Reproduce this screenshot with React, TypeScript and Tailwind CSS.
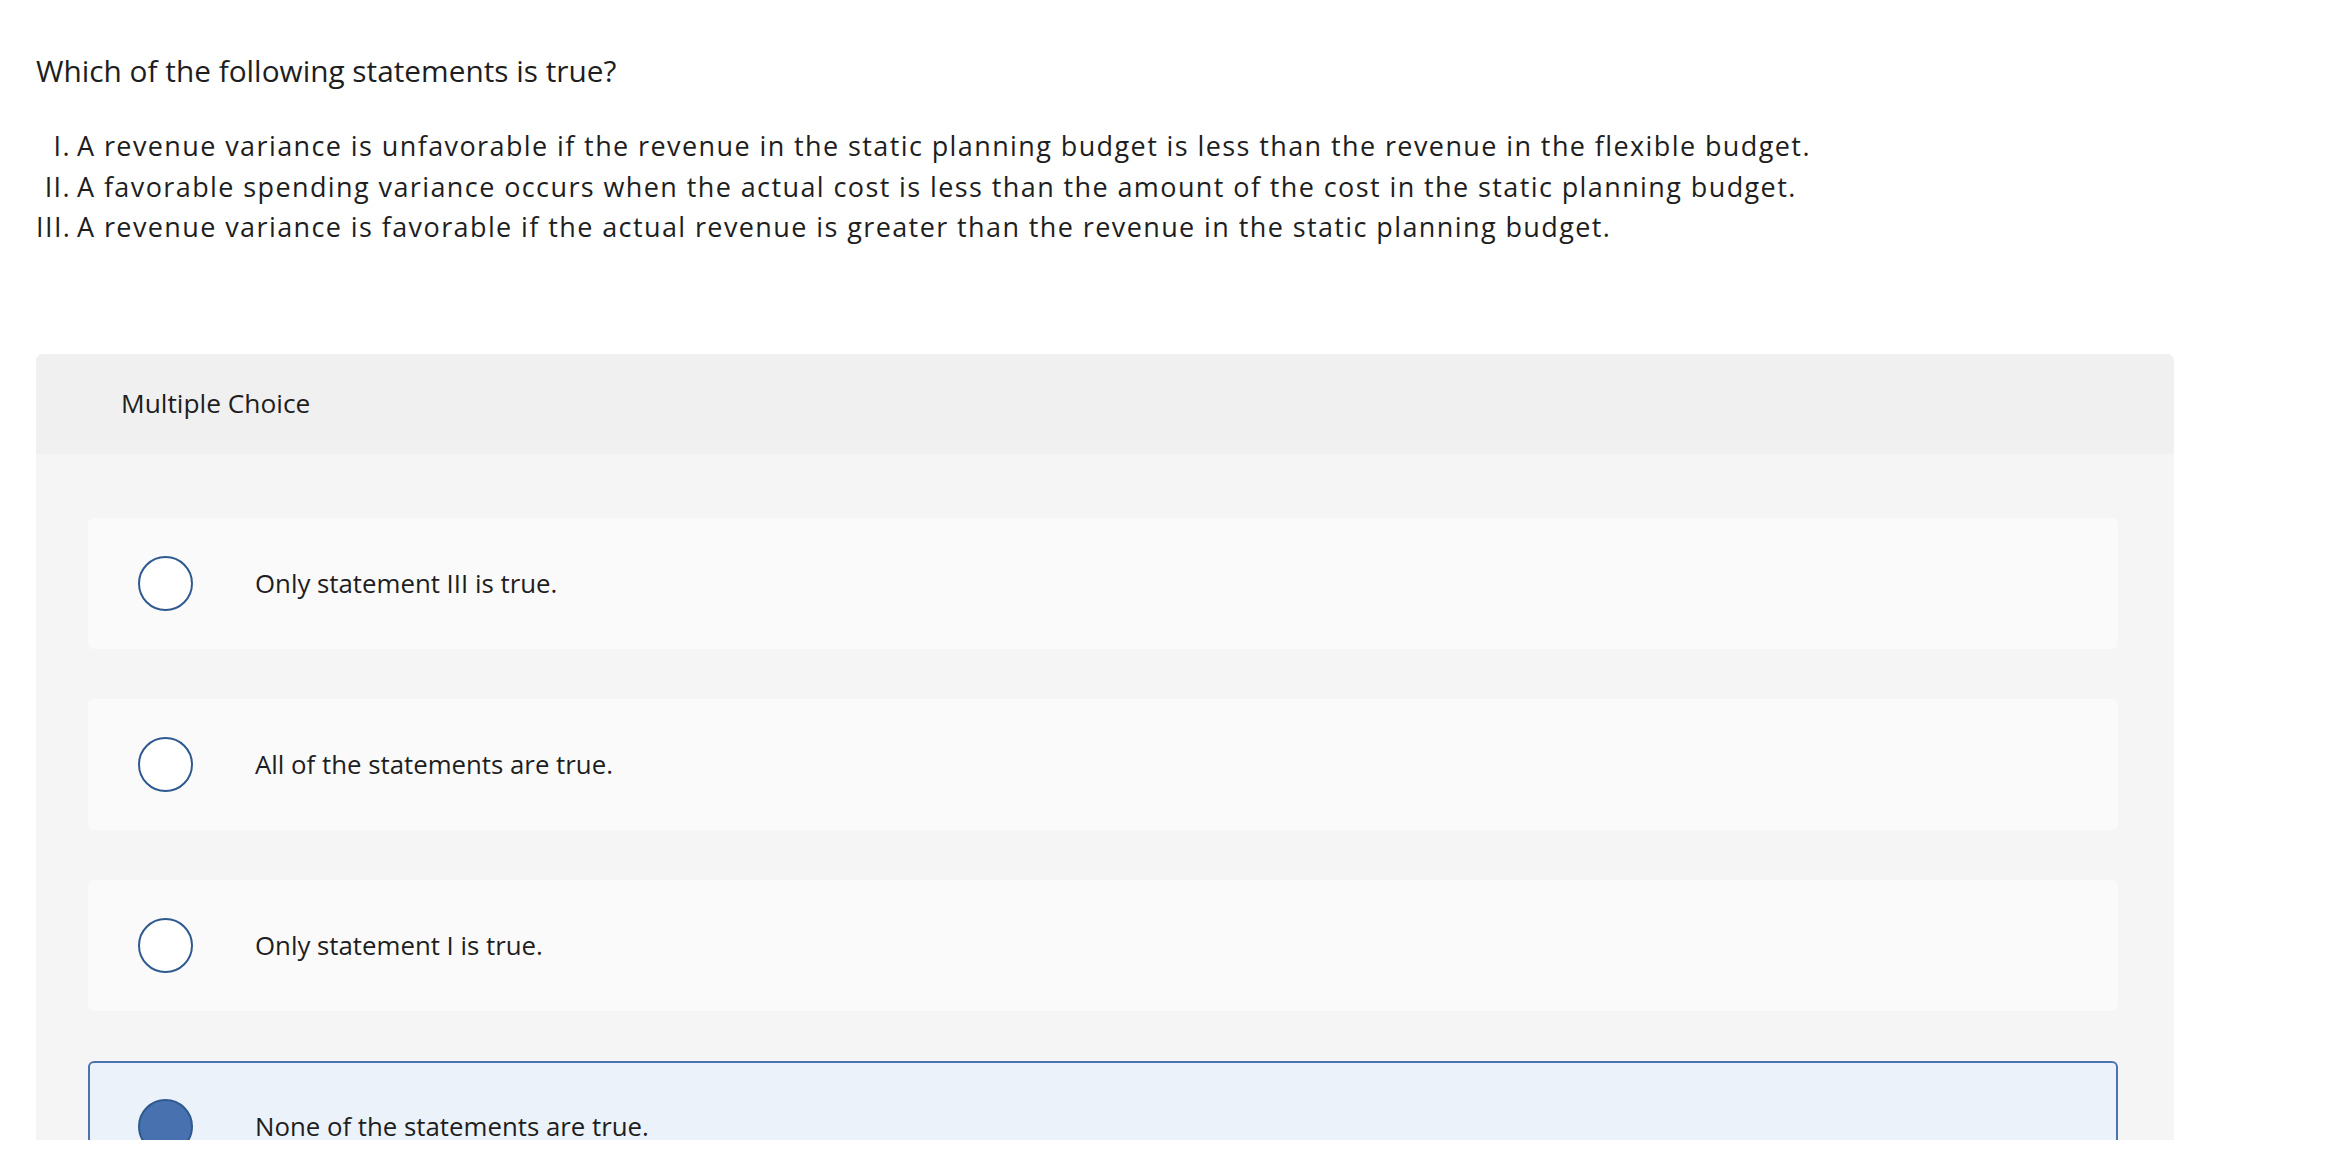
import React from "react";

const options = [
  { text: "Only statement III is true.", selected: false },
  { text: "All of the statements are true.", selected: false },
  { text: "Only statement I is true.", selected: false },
  { text: "None of the statements are true.", selected: true },
];

const statements = [
  { n: "I.", t: "A revenue variance is unfavorable if the revenue in the static planning budget is less than the revenue in the flexible budget." },
  { n: "II.", t: "A favorable spending variance occurs when the actual cost is less than the amount of the cost in the static planning budget." },
  { n: "III.", t: "A revenue variance is favorable if the actual revenue is greater than the revenue in the static planning budget." },
];

export default function App() {
  return (
    <div className="w-[2328px] h-[1158px] bg-white">
      <div
        className="h-[1140px] overflow-hidden pl-[36px] pt-[48px] text-[#1e1e1e]"
        style={{ fontFamily: '"Open Sans", "Liberation Sans", sans-serif' }}
      >
        <div className="text-[29.8px] leading-[45px]">Which of the following statements is true?</div>
        <div className="mt-[33px] text-[27px] leading-[40.5px] tracking-[1.4px]">
          {statements.map((s) => (
            <div key={s.n} className="flex">
              <span className="w-[35px] text-right shrink-0">{s.n}</span>
              <span className="ml-[6px]">{s.t}</span>
            </div>
          ))}
        </div>
        <div className="mt-[106px] w-[2138px] rounded-t-[7px] bg-[#f5f5f5]">
          <div className="h-[100px] rounded-t-[7px] bg-[#f0f0f0] pl-[85px] flex items-center text-[26.3px]">
            Multiple Choice
          </div>
          <div className="pt-[64px] pl-[52px] pr-[56px] flex flex-col gap-[50px]">
            {options.map((o) => (
              <div
                key={o.text}
                className={
                  o.selected
                    ? "h-[131px] rounded-[6px] border-2 border-[#4a73b0] bg-[#ebf2fa] flex items-center pl-[48px]"
                    : "h-[131px] rounded-[6px] border-2 border-transparent bg-[#fafafa] flex items-center pl-[48px]"
                }
              >
                <div
                  className={
                    o.selected
                      ? "w-[55px] h-[55px] rounded-full border-2 border-[#2f5a90] bg-[#4772af] shrink-0"
                      : "w-[55px] h-[55px] rounded-full border-2 border-[#2f5a90] bg-white shrink-0"
                  }
                />
                <div className="ml-[62px] text-[25.8px]">{o.text}</div>
              </div>
            ))}
          </div>
        </div>
      </div>
    </div>
  );
}
